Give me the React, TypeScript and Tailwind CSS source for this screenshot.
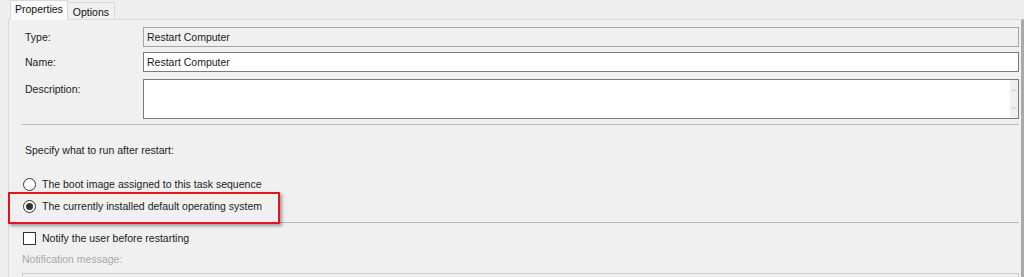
import React from 'react';

const labelCls = 'pl-[3px] text-[#1b1b1b]';

function Radio({ checked, label }: { checked?: boolean; label: string }) {
  return (
    <div className="flex items-center h-[14px]">
      <span className="ml-[1px] w-[13px] h-[13px] rounded-full border border-[#333333] bg-white flex items-center justify-center">
        {checked && <span className="w-[7px] h-[7px] rounded-full bg-[#333333]" />}
      </span>
      <span className="ml-[6px] text-[#1b1b1b]">{label}</span>
    </div>
  );
}

export default function App() {
  return (
    <div className="relative w-[1024px] h-[277px] overflow-hidden bg-[#eeeeee] font-['Liberation_Sans',Arial,sans-serif] text-[10.5px] leading-[13px]">
      {/* tab strip */}
      <div className="flex items-end h-[19px] pl-[10px]">
        <div className="relative z-10 h-[20px] -mb-[1px] px-[4px] pt-[2px] bg-[#fafafa] border border-b-0 border-[#d9d9d9] text-[#111]">
          Properties
        </div>
        <div className="h-[17px] px-[5px] pt-[3px] bg-[#f0f0f0] border border-l-0 border-b-0 border-[#d9d9d9] text-[#111]">
          Options
        </div>
      </div>

      {/* tab page */}
      <div className="ml-[8px] w-[1016px] h-[258px] bg-[#f0f0f0] border-l border-t border-[#d9d9d9] border-r-[3px] border-r-[#a9a9a9] pl-[13px] pr-[2px] pt-[7px]">
        <div className="grid grid-cols-[121px_1fr] gap-y-[5px] items-center">
          <div className={labelCls}>Type:</div>
          <div className="h-[20px] border border-[#a4a4a4] bg-[#f0f0f0] pl-[3px] flex items-center text-[#1b1b1b]">
            Restart Computer
          </div>
          <div className={labelCls}>Name:</div>
          <div className="h-[20px] border border-[#7a7a7a] bg-white pl-[3px] flex items-center text-[#1b1b1b]">
            Restart Computer
          </div>
        </div>
        <div className="grid grid-cols-[121px_1fr] mt-[7px]">
          <div className={`${labelCls} pt-[4px]`}>Description:</div>
          <div className="h-[40px] border border-[#7a7a7a] bg-white flex justify-end">
            <div className="w-[8px] h-full bg-[#f0f0f0] flex flex-col items-center justify-between py-[8px]">
              <svg width="6" height="4" viewBox="0 0 6 4">
                <path d="M0.5 3.5 L3 1 L5.5 3.5" fill="none" stroke="#c4c4c4" strokeWidth="1" />
              </svg>
              <svg width="6" height="4" viewBox="0 0 6 4">
                <path d="M0.5 0.5 L3 3 L5.5 0.5" fill="none" stroke="#c4c4c4" strokeWidth="1" />
              </svg>
            </div>
          </div>
        </div>

        <div className="mt-[5px] border-t border-[#b5b5b5]" />

        <div className="mt-[19px] pl-[3px] text-[#1b1b1b]">Specify what to run after restart:</div>

        <div className="mt-[20px]">
          <Radio label="The boot image assigned to this task sequence" />
        </div>
        <div className="mt-[8px]">
          <Radio checked label="The currently installed default operating system" />
        </div>

        <div className="mt-[9px] border-t border-[#b5b5b5]" />

        <div className="mt-[9px] flex items-center h-[13px]">
          <span className="ml-[1px] w-[13px] h-[13px] border border-[#333333] bg-white" />
          <span className="ml-[6px] text-[#1b1b1b]">Notify the user before restarting</span>
        </div>

        <div className="mt-[8px] text-[#a8a8a8]">Notification message:</div>

        <div className="mt-[7px] h-[20px] border border-[#cccccc] bg-[#f0f0f0]" />
      </div>

      {/* red highlight annotation */}
      <div className="absolute left-[8px] top-[192px] w-[272px] h-[32px] border-2 border-[#e5141c] shadow-[2px_2px_3px_rgba(0,0,0,0.35)]" />
    </div>
  );
}
